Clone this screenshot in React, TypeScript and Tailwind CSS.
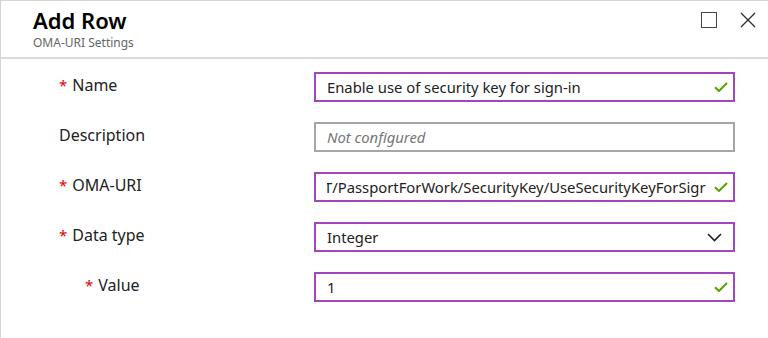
import React from "react";

const FONT = { fontFamily: '"Noto Sans", "Open Sans", Arial, sans-serif' };

function Check() {
  return (
    <svg width="14" height="10" viewBox="0 0 14 10" className="shrink-0">
      <path d="M1 5.2 L5 9 L13 1" fill="none" stroke="#57a300" strokeWidth="2" />
    </svg>
  );
}

function Chevron() {
  return (
    <svg width="15" height="9" viewBox="0 0 15 9" className="shrink-0">
      <path d="M1 1 L7.5 7.5 L14 1" fill="none" stroke="#222" strokeWidth="1.6" />
    </svg>
  );
}

function Label({ text, required, indent }: { text: string; required?: boolean; indent?: boolean }) {
  return (
    <div className={"flex items-baseline gap-[5px] pt-[1px] text-[16px] leading-[24px] text-[#222] " + (indent ? "pl-[26px]" : "")}>
      {required && <span className="text-[#e00000] text-[15px]">*</span>}
      <span>{text}</span>
    </div>
  );
}

function Field({ children, dirty = true, icon }: { children: React.ReactNode; dirty?: boolean; icon?: React.ReactNode }) {
  return (
    <div
      className={
        "flex h-[30px] w-[421px] items-center gap-[6px] overflow-hidden border-2 pl-[11px] pr-[5px] " +
        (dirty ? "border-[#a046c0]" : "border-[#a6a6a6]")
      }
    >
      <div className="min-w-0 flex-1 overflow-hidden whitespace-nowrap text-[14.8px] text-[#222]">{children}</div>
      {icon}
    </div>
  );
}

const rows = [
  { label: "Name", required: true, field: <Field icon={<Check />}>Enable use of security key for sign-in</Field> },
  {
    label: "Description",
    field: (
      <Field dirty={false}>
        <span className="italic text-[#767676]">Not configured</span>
      </Field>
    ),
  },
  {
    label: "OMA-URI",
    required: true,
    field: (
      <Field icon={<Check />}>
        <span className="-ml-[3px]">T/PassportForWork/SecurityKey/UseSecurityKeyForSigr</span>
      </Field>
    ),
  },
  { label: "Data type", required: true, field: <Field icon={<span className="pr-[6px]"><Chevron /></span>}>Integer</Field> },
  { label: "Value", required: true, indent: true, field: <Field icon={<Check />}>1</Field> },
];

export default function App() {
  return (
    <div className="h-[338px] w-[768px] overflow-hidden bg-white" style={FONT}>
      <div className="h-full border-l border-t border-[#d4d4d4]">
        <div className="flex h-[58px] items-start justify-between border-b-2 border-[#dadada] pl-[32px] pr-[12px]">
          <div className="pt-[4px]">
            <div className="text-[22px] font-semibold leading-[30px] text-black">Add Row</div>
            <div className="text-[12px] leading-[16px] text-[#666]">OMA-URI Settings</div>
          </div>
          <div className="flex items-center gap-[23px] pt-[11px]">
            <div className="h-[16px] w-[16px] border-[1.5px] border-[#444]" />
            <svg width="16" height="16" viewBox="0 0 16 16">
              <path d="M1 1 L15 15 M15 1 L1 15" stroke="#333" strokeWidth="1.4" />
            </svg>
          </div>
        </div>
        <div className="flex flex-col gap-[20px] pt-[13px]">
          {rows.map((r) => (
            <div key={r.label} className="flex items-start">
              <div className="w-[313px] pl-[58px]">
                <Label text={r.label} required={r.required} indent={r.indent} />
              </div>
              {r.field}
            </div>
          ))}
        </div>
      </div>
    </div>
  );
}
